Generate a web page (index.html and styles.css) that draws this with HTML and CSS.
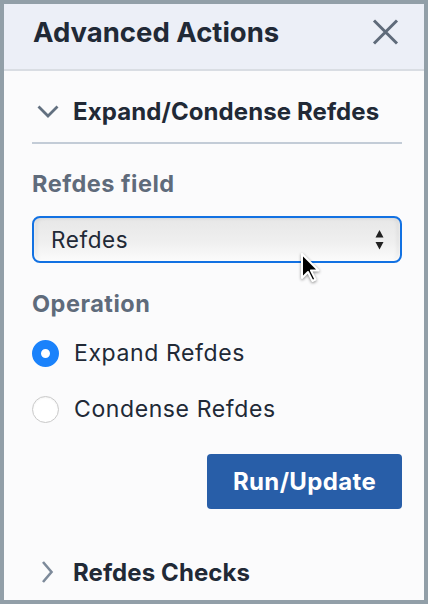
FILE: index.html
```html
<!DOCTYPE html>
<html lang="en">
<head>
    <meta charset="UTF-8">
    <meta name="viewport" content="width=device-width, initial-scale=1.0">
    <title>Advanced Actions</title>
    <link rel="stylesheet" href="styles.css">
</head>
<body>
    <div class="panel">
        <header>
            <div class="title">Advanced Actions</div>
            <svg class="close" width="27" height="26" viewBox="0 0 27 26">
                <path d="M2 1.5 L25 24.5 M25 1.5 L2 24.5" stroke="#5f6b7a" stroke-width="3" fill="none"/>
            </svg>
        </header>

        <div class="content">
            <div class="section open">
                <svg class="chev" width="22" height="13" viewBox="0 0 22 13">
                    <path d="M1.5 1.5 L11 11 L20.5 1.5" stroke="#627080" stroke-width="2.8" fill="none"/>
                </svg>
                <span>Expand/Condense Refdes</span>
            </div>

            <div class="label first">Refdes field</div>
            <div class="select">
                <span>Refdes</span>
                <svg class="updown" width="9" height="20" viewBox="0 0 9 20">
                    <path d="M4.5 0 L8.5 7.5 L0.5 7.5 Z M0.5 12 L8.5 12 L4.5 19.5 Z" fill="#222"/>
                </svg>
                <svg class="cursor" width="22" height="34" viewBox="-2 -2 22 34">
                    <path d="M0 0 L0 24 L6 18 L10.5 27 L13.5 25.5 L9 16.5 L16.5 16.5 Z" fill="#000" stroke="#fff" stroke-width="2" stroke-linejoin="round"/>
                </svg>
            </div>

            <div class="label">Operation</div>
            <div class="radio checked"><span class="dot"></span>Expand Refdes</div>
            <div class="radio second"><span class="dot"></span>Condense Refdes</div>

            <div class="actions">
                <button>Run/Update</button>
            </div>

            <div class="section closed">
                <svg class="chev" width="22" height="22" viewBox="0 0 22 22">
                    <path d="M6 1 L14.5 11 L6 21" stroke="#7d8a9a" stroke-width="2.6" fill="none"/>
                </svg>
                <span>Refdes Checks</span>
            </div>
        </div>
    </div>
</body>
</html>
```

FILE: styles.css
```css
body {
    margin: 0;
    font-family: Inter, "Noto Sans", sans-serif;
    color: #212936;
    background: #fbfbfc;
}
.panel {
    height: 604px;
    box-sizing: border-box;
    border: 4px solid #929fa8;
    background: #fbfbfc;
    overflow: hidden;
}
header {
    height: 67px;
    box-sizing: border-box;
    padding: 0 25px 9px 29px;
    display: flex;
    justify-content: space-between;
    align-items: center;
    background: #eceff7;
    border-bottom: 2px solid #d9dde3;
}
.title {
    font-size: 27.5px;
    font-weight: 700;
    line-height: 34px;
}
.close {
    display: block;
}
.content {
    padding: 0 22px 0 28px;
}
.section {
    display: flex;
    align-items: center;
    gap: 14px;
    height: 30px;
    font-size: 24px;
    font-weight: 700;
    letter-spacing: 0.1px;
}
.section .chev {
    margin-left: 5px;
}
.section.open {
    margin-top: 25px;
    padding-bottom: 16px;
    border-bottom: 2px solid #c3ccd7;
}
.section.closed {
    margin-top: 48px;
}
.label {
    margin-top: 27px;
    font-size: 23.5px;
    font-weight: 700;
    line-height: 28px;
    letter-spacing: 0.5px;
    color: #5f6b7b;
}
.label.first {
    margin-top: 26px;
}
.select {
    position: relative;
    margin-top: 18px;
    height: 47px;
    box-sizing: border-box;
    padding: 0 16px 0 17px;
    display: flex;
    align-items: center;
    justify-content: space-between;
    border: 2px solid #1271e2;
    border-radius: 8px;
    background: linear-gradient(#e7e7e7, #efefef 55%, #fbfbfb);
    box-shadow: inset 0 -2px 3px rgba(255, 255, 255, 0.9), inset 3px 0 4px rgba(0, 0, 0, 0.06), inset -3px 0 4px rgba(0, 0, 0, 0.06);
    font-size: 22.5px;
    letter-spacing: 0.6px;
}
.select .updown {
    display: block;
}
.cursor {
    position: absolute;
    left: 266px;
    top: 34px;
    filter: drop-shadow(0 1px 1.5px rgba(0, 0, 0, 0.45));
}
.radio {
    display: flex;
    align-items: center;
    gap: 15px;
    height: 28px;
    margin-top: 21px;
    font-size: 23px;
    letter-spacing: 0.6px;
}
.radio.second {
    margin-top: 28px;
}
.dot {
    width: 27px;
    height: 27px;
    box-sizing: border-box;
    border-radius: 50%;
    border: 1px solid #c9c9c9;
    background: #fff;
    box-shadow: inset 0 1px 2px rgba(0, 0, 0, 0.05);
}
.radio.checked .dot {
    border: 9px solid #1a82fb;
    background: #fff;
    box-shadow: none;
}
.actions {
    display: flex;
    justify-content: flex-end;
    margin-top: 31px;
}
.actions button {
    width: 195px;
    height: 55px;
    border: none;
    border-radius: 4px;
    background: #285ea8;
    color: white;
    font-family: Inter, "Noto Sans", sans-serif;
    font-size: 24px;
    font-weight: 700;
    letter-spacing: 0.35px;
    cursor: pointer;
}
```
